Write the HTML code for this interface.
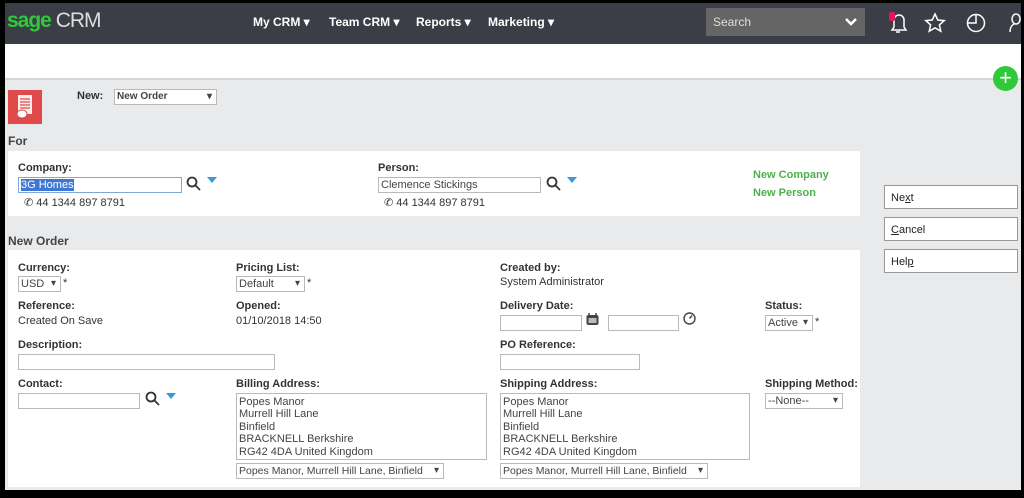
<!DOCTYPE html>
<html><head><meta charset="utf-8"><style>
*{box-sizing:border-box;margin:0;padding:0}
body{width:1024px;height:498px;overflow:hidden;background:#000;font-family:"Liberation Sans",sans-serif;font-size:11px;color:#333;position:relative}
.a{position:absolute;white-space:nowrap}
.lbl{font-weight:bold;color:#333;font-size:11px}
.inp{background:#fff;border:1px solid #b9b9b9;height:16px;font-size:11px;padding-left:2px;line-height:14px;color:#444;overflow:hidden}
.btn{background:#fff;border:1px solid #999;width:134px;height:24px;left:884px;font-size:11px;padding:6px 6px;color:#222}
.tri{width:0;height:0;border-left:5px solid transparent;border-right:5px solid transparent;border-top:6px solid #3a9ad9}
.sel::after{content:"▾";position:absolute;right:4px;top:0;font-size:10px;background:#fff}
.nv{color:#fff;font-weight:bold;font-size:12px;top:15px}
</style></head><body>
<div class="a" style="left:5px;top:3px;width:1016px;height:487px;background:#e9eaec"></div>
<div class="a" style="left:5px;top:3px;width:1016px;height:41px;background:#3b3e46"></div>
<div class="a" style="left:7px;top:9px;font-size:21px;letter-spacing:-1px"><span style="color:#2fc93b;font-weight:bold">sage</span> <span style="color:#ddd">CRM</span></div>
<div class="a nv" style="left:253px">My CRM ▾</div>
<div class="a nv" style="left:329px">Team CRM ▾</div>
<div class="a nv" style="left:416px">Reports ▾</div>
<div class="a nv" style="left:488px">Marketing ▾</div>
<div class="a" style="left:706px;top:8px;width:159px;height:28px;background:#656565;color:#ddd;font-size:12px;padding:7px 7px">Search
<svg style="position:absolute;right:8px;top:10px" width="12" height="8" fill="none" stroke="#fff" stroke-width="2.5"><path d="M1 1 L6 6 L11 1"/></svg></div>
<svg class="a" style="left:886px;top:10px" width="135" height="26" fill="none" stroke="#fff" stroke-width="1.5">
<path d="M6 20 L8 17 V10 a5 5 0 0 1 10 0 V17 L20 20 Z M10 22 h4"/><rect x="3" y="2" width="6" height="9" rx="2" fill="#e0195a" stroke="none"/>
<path d="M49 4 l2.8 6 6.4.6-4.8 4.3 1.4 6.3-5.8-3.3-5.8 3.3 1.4-6.3-4.8-4.3 6.4-.6z"/>
<circle cx="90" cy="13" r="8.5"/><path d="M90 5 V13 H82"/>
<path d="M124 22 c0-5 2-7 4-8 M130 4 a4 5 0 1 0 0.1 0"/>
</svg>
<div class="a" style="left:5px;top:44px;width:1016px;height:36px;background:#fff;border-bottom:2px solid #d5d6d8"></div>
<div class="a" style="left:993px;top:66px;width:25px;height:25px;border-radius:50%;background:#2fc93b;color:#fff;font-size:22px;line-height:24px;text-align:center">+</div>
<div class="a" style="left:8px;top:90px;width:34px;height:34px;background:#e04a4a">
<svg width="34" height="34"><rect x="10" y="5" width="14" height="19" fill="#fff" opacity=".9"/><g stroke="#e04a4a" stroke-width="1.2"><path d="M12 9h10M12 12h10M12 15h10M12 18h10"/></g><ellipse cx="14" cy="24" rx="5" ry="4" fill="#fff" stroke="#e04a4a"/></svg></div>
<div class="a lbl" style="left:77px;top:90px">New:</div>
<div class="a inp sel" style="left:114px;top:89px;width:103px;font-weight:bold;font-size:10px">New Order</div>
<div class="a" style="left:8px;top:134px;font-size:12px;font-weight:bold;color:#444">For</div>
<div class="a" style="left:8px;top:151px;width:852px;height:65px;background:#fff"></div>
<div class="a lbl" style="left:18px;top:162px">Company:</div>
<div class="a inp" style="left:18px;top:177px;width:164px;border-color:#7fa8d8"><span style="background:#3d78d6;color:#fff">3G Homes</span></div>
<svg class="a" style="left:186px;top:176px" width="16" height="16" fill="none" stroke="#333" stroke-width="1.8"><circle cx="6" cy="6" r="4.5"/><path d="M9.5 9.5 L14 14"/></svg>
<div class="a tri" style="left:207px;top:177px"></div>
<div class="a" style="left:24px;top:196px">✆ 44 1344 897 8791</div>
<div class="a lbl" style="left:378px;top:162px">Person:</div>
<div class="a inp" style="left:378px;top:177px;width:163px">Clemence Stickings</div>
<svg class="a" style="left:546px;top:176px" width="16" height="16" fill="none" stroke="#333" stroke-width="1.8"><circle cx="6" cy="6" r="4.5"/><path d="M9.5 9.5 L14 14"/></svg>
<div class="a tri" style="left:567px;top:177px"></div>
<div class="a" style="left:384px;top:196px">✆ 44 1344 897 8791</div>
<div class="a" style="left:753px;top:169px;color:#4db04d;font-weight:bold">New Company</div>
<div class="a" style="left:753px;top:187px;color:#4db04d;font-weight:bold">New Person</div>
<div class="a" style="left:8px;top:234px;font-size:12px;font-weight:bold;color:#444">New Order</div>
<div class="a" style="left:8px;top:250px;width:852px;height:237px;background:#fff"></div>
<div class="a lbl" style="left:18px;top:262px">Currency:</div>
<div class="a inp sel" style="left:18px;top:276px;width:43px">USD</div><div class="a" style="left:63px;top:277px">*</div>
<div class="a lbl" style="left:236px;top:262px">Pricing List:</div>
<div class="a inp sel" style="left:236px;top:276px;width:69px">Default</div><div class="a" style="left:307px;top:277px">*</div>
<div class="a lbl" style="left:500px;top:262px">Created by:</div>
<div class="a" style="left:500px;top:276px">System Administrator</div>
<div class="a lbl" style="left:18px;top:300px">Reference:</div>
<div class="a" style="left:18px;top:315px">Created On Save</div>
<div class="a lbl" style="left:236px;top:300px">Opened:</div>
<div class="a" style="left:236px;top:315px">01/10/2018 14:50</div>
<div class="a lbl" style="left:500px;top:300px">Delivery Date:</div>
<div class="a inp" style="left:500px;top:315px;width:82px"></div>
<svg class="a" style="left:586px;top:313px" width="13" height="12"><rect x="0.5" y="2" width="12" height="10" rx="2" fill="#444"/><rect x="2.5" y="5" width="8" height="5" fill="#bbb"/><path d="M3 0v3M10 0v3" stroke="#444" stroke-width="1.5"/></svg>
<div class="a inp" style="left:608px;top:315px;width:71px"></div>
<svg class="a" style="left:683px;top:312px" width="13" height="13" fill="none" stroke="#444" stroke-width="1.4"><circle cx="6.5" cy="6.5" r="5.5"/><path d="M6.5 6.5 L9 3.5"/></svg>
<div class="a lbl" style="left:765px;top:300px">Status:</div>
<div class="a inp sel" style="left:765px;top:315px;width:48px">Active</div><div class="a" style="left:815px;top:316px">*</div>
<div class="a lbl" style="left:18px;top:339px">Description:</div>
<div class="a inp" style="left:18px;top:354px;width:257px"></div>
<div class="a lbl" style="left:500px;top:339px">PO Reference:</div>
<div class="a inp" style="left:500px;top:354px;width:140px"></div>
<div class="a lbl" style="left:18px;top:378px">Contact:</div>
<div class="a inp" style="left:18px;top:393px;width:122px"></div>
<svg class="a" style="left:145px;top:391px" width="16" height="16" fill="none" stroke="#333" stroke-width="1.8"><circle cx="6" cy="6" r="4.5"/><path d="M9.5 9.5 L14 14"/></svg>
<div class="a tri" style="left:166px;top:393px"></div>
<div class="a lbl" style="left:236px;top:378px">Billing Address:</div>
<div class="a inp" style="left:236px;top:393px;width:251px;height:67px;line-height:12.4px;padding-top:2px">Popes Manor<br>Murrell Hill Lane<br>Binfield<br>BRACKNELL Berkshire<br>RG42 4DA United Kingdom</div>
<div class="a inp sel" style="left:236px;top:463px;width:208px;font-size:10.5px">Popes Manor, Murrell Hill Lane, Binfield</div>
<div class="a lbl" style="left:500px;top:378px">Shipping Address:</div>
<div class="a inp" style="left:500px;top:393px;width:250px;height:67px;line-height:12.4px;padding-top:2px">Popes Manor<br>Murrell Hill Lane<br>Binfield<br>BRACKNELL Berkshire<br>RG42 4DA United Kingdom</div>
<div class="a inp sel" style="left:500px;top:463px;width:208px;font-size:10.5px">Popes Manor, Murrell Hill Lane, Binfield</div>
<div class="a lbl" style="left:765px;top:378px">Shipping Method:</div>
<div class="a inp sel" style="left:765px;top:393px;width:78px">--None--</div>
<div class="a btn" style="top:185px">Ne<u>x</u>t</div>
<div class="a btn" style="top:217px"><u>C</u>ancel</div>
<div class="a btn" style="top:249px">Hel<u>p</u></div>
</body></html>
